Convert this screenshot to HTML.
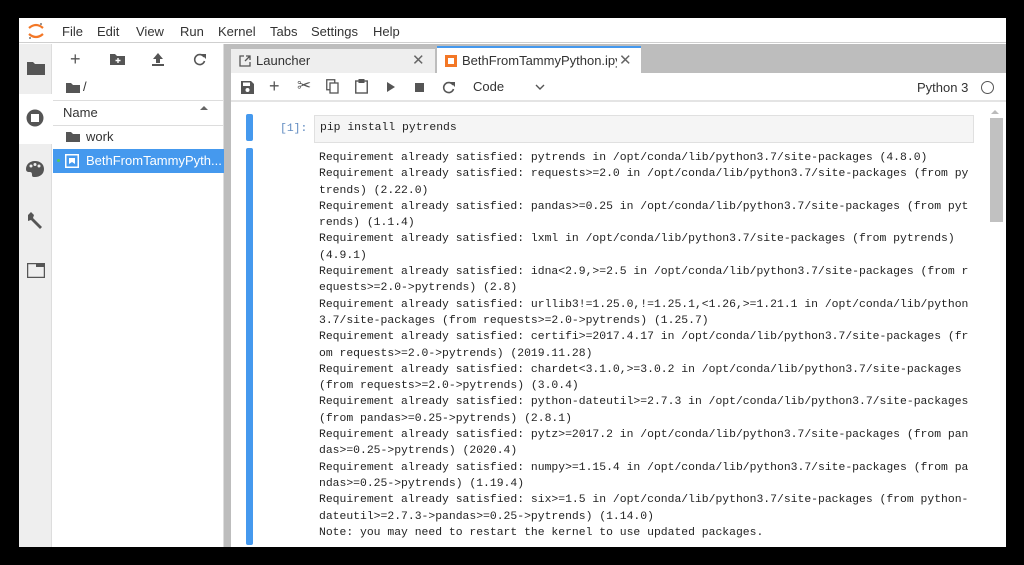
<!DOCTYPE html>
<html><head><style>
*{margin:0;padding:0;box-sizing:border-box}
body{width:1024px;height:565px;background:#000;position:relative;overflow:hidden;font-family:"Liberation Sans",sans-serif;color:#333}
.a{position:absolute}
#win{left:19px;top:18px;width:987px;height:529px;background:#fff}
.menu{font-size:13px;color:#333;top:6px}
.mono{font-family:"Liberation Mono",monospace;font-size:11.4px}
#out div{height:16.3px;line-height:16.3px;white-space:pre;color:#222}
</style></head><body>
<div id="win" class="a">
 <div class="a" style="left:0;top:0;width:987px;height:25px;background:#fff;border-bottom:1px solid #cfcfcf"></div>
 <svg class="a" style="left:7px;top:3px" width="20" height="20" viewBox="0 0 20 20"><path d="M3 7 Q10 1 17 7" stroke="#f37726" stroke-width="2.2" fill="none"/><path d="M3 13 Q10 19 17 13" stroke="#f37726" stroke-width="2.2" fill="none"/><circle cx="15" cy="3" r="1" fill="#777"/><circle cx="4" cy="17" r="1" fill="#777"/></svg>
 <div class="a menu" style="left:43px">File</div>
 <div class="a menu" style="left:78px">Edit</div>
 <div class="a menu" style="left:117px">View</div>
 <div class="a menu" style="left:161px">Run</div>
 <div class="a menu" style="left:199px">Kernel</div>
 <div class="a menu" style="left:251px">Tabs</div>
 <div class="a menu" style="left:292px">Settings</div>
 <div class="a menu" style="left:354px">Help</div>
 <div class="a" style="left:0;top:26px;width:33px;height:503px;background:#eee;border-right:1px solid #ddd"></div>
 <div class="a" style="left:0;top:76px;width:34px;height:50px;background:#fff"></div>
 <svg class="a" style="left:8px;top:42px" width="18" height="15"><path d="M0 2h6l2 2h10v11H0z" fill="#555"/></svg>
 <svg class="a" style="left:7px;top:91px" width="18" height="18"><circle cx="9" cy="9" r="8.5" fill="#555"/><rect x="5" y="5" width="8" height="8" fill="#fff"/></svg>
 <svg class="a" style="left:7px;top:143px" width="18" height="16"><path d="M9 0C3 0 0 4 0 8c0 3 2 3 4 3 2 0 2 2 2 3 0 2 1 2 3 2 5 0 9-3 9-8S14 0 9 0z" fill="#555"/><circle cx="5" cy="5" r="1.5" fill="#eee"/><circle cx="9" cy="3.5" r="1.5" fill="#eee"/><circle cx="13" cy="5" r="1.5" fill="#eee"/></svg>
 <svg class="a" style="left:7px;top:193px" width="18" height="18"><path d="M2 4l3-3 3 3-1 3 9 9-2 2-9-9-3 1z" fill="#555"/></svg>
 <svg class="a" style="left:8px;top:245px" width="18" height="15"><rect x="0.5" y="0.5" width="17" height="14" fill="none" stroke="#555" stroke-width="1.5"/><rect x="9" y="0" width="9" height="4" fill="#555"/></svg>
 <div class="a" style="left:34px;top:26px;width:171px;height:503px;background:#fff;border-right:1px solid #ddd"></div>
 <div class="a" style="left:51px;top:31px;font-size:18px;color:#555">+</div>
 <svg class="a" style="left:91px;top:35px" width="15" height="12"><path d="M0 1h5l2 2h8v9H0z" fill="#555"/><path d="M8 5v5M5.5 7.5h5" stroke="#fff" stroke-width="1.4"/></svg>
 <svg class="a" style="left:133px;top:35px" width="12" height="13"><path d="M6 0l5 6H8v4H4V6H1z" fill="#555"/><rect x="0" y="11" width="12" height="2" fill="#555"/></svg>
 <svg class="a" style="left:174px;top:35px" width="13" height="13"><path d="M11 4A5 5 0 1 0 11.5 8" stroke="#555" stroke-width="1.6" fill="none"/><path d="M8 1h5v5z" fill="#555"/></svg>
 <svg class="a" style="left:47px;top:64px" width="14" height="11"><path d="M0 1h5l2 2h7v8H0z" fill="#555"/></svg>
 <div class="a" style="left:64px;top:61px;font-size:13px">/</div>
 <div class="a" style="left:34px;top:82px;width:171px;height:26px;border-top:1px solid #ddd;border-bottom:1px solid #ddd"></div>
 <div class="a" style="left:44px;top:87px;font-size:13px">Name</div>
 <div class="a" style="left:181px;top:88px;width:0;height:0;border-left:4px solid transparent;border-right:4px solid transparent;border-bottom:4px solid #666"></div>
 <svg class="a" style="left:47px;top:113px" width="14" height="11"><path d="M0 1h5l2 2h7v8H0z" fill="#555"/></svg>
 <div class="a" style="left:67px;top:111px;font-size:13px;color:#333">work</div>
 <div class="a" style="left:34px;top:131px;width:171px;height:24px;background:#4599ee"></div>
 <div class="a" style="left:38px;top:141px;width:3px;height:3px;background:#5c5;border-radius:50%"></div>
 <svg class="a" style="left:46px;top:136px" width="14" height="14"><rect x="0.75" y="0.75" width="12.5" height="12.5" fill="none" stroke="#fff" stroke-width="1.5"/><path d="M4 4h6v6l-3-2-3 2z" fill="#fff"/></svg>
 <div class="a" style="left:67px;top:135px;font-size:13px;color:#fff">BethFromTammyPyth...</div>
 <div class="a" style="left:205px;top:26px;width:7px;height:503px;background:#bdbdbd"></div>
 <div class="a" style="left:212px;top:26px;width:775px;height:29px;background:#bdbdbd"></div>
 <div class="a" style="left:212px;top:31px;width:204px;height:24px;background:#eee"></div>
 <svg class="a" style="left:220px;top:37px" width="12" height="12"><path d="M5 1H1v10h10V7" stroke="#555" stroke-width="1.3" fill="none"/><path d="M6 6l5-5M7 1h4v4" stroke="#555" stroke-width="1.3" fill="none"/></svg>
 <div class="a" style="left:237px;top:35px;font-size:13px">Launcher</div>
 <div class="a" style="left:393px;top:33px;font-size:15px;color:#666">✕</div>
 <div class="a" style="left:418px;top:28px;width:204px;height:28px;background:#fff;border-top:2px solid #4599ee"></div>
 <svg class="a" style="left:426px;top:37px" width="12" height="12"><rect width="12" height="12" fill="#f37726"/><rect x="3" y="3" width="6" height="6" fill="#fff"/></svg>
 <div class="a" style="left:443px;top:35px;font-size:13px;width:155px;overflow:hidden;white-space:nowrap">BethFromTammyPython.ipynb</div>
 <div class="a" style="left:600px;top:33px;font-size:15px;color:#666">✕</div>
 <div class="a" style="left:212px;top:55px;width:775px;height:29px;background:#fff;border-bottom:2px solid #e4e4e4"></div>
 <svg class="a" style="left:222px;top:63px" width="13" height="13"><path d="M0 0h10l3 3v10H0z" fill="#555"/><rect x="2" y="1.5" width="7" height="3.5" fill="#fff"/><circle cx="6.5" cy="9" r="2" fill="#fff"/></svg>
 <div class="a" style="left:250px;top:58px;font-size:18px;color:#555">+</div>
 <div class="a" style="left:278px;top:58px;font-size:17px;color:#555">✂</div>
 <svg class="a" style="left:307px;top:61px" width="13" height="15"><rect x="0.75" y="0.75" width="8" height="10" fill="none" stroke="#555" stroke-width="1.3"/><rect x="4" y="4" width="8" height="10" fill="#fff" stroke="#555" stroke-width="1.3"/></svg>
 <svg class="a" style="left:336px;top:61px" width="13" height="15"><rect x="0.75" y="2" width="11.5" height="12" fill="none" stroke="#555" stroke-width="1.4"/><rect x="3.5" y="0" width="6" height="4" fill="#555"/></svg>
 <div class="a" style="left:368px;top:64px;width:0;height:0;border-top:5px solid transparent;border-bottom:5px solid transparent;border-left:8px solid #555"></div>
 <div class="a" style="left:396px;top:65px;width:9px;height:9px;background:#555"></div>
 <svg class="a" style="left:423px;top:63px" width="13" height="13"><path d="M11 4A5 5 0 1 0 11.5 8" stroke="#555" stroke-width="1.6" fill="none"/><path d="M8 1h5v5z" fill="#555"/></svg>
 <div class="a" style="left:454px;top:61px;font-size:13px">Code</div>
 <svg class="a" style="left:516px;top:66px" width="10" height="7"><path d="M1 1l4 4 4-4" stroke="#555" stroke-width="1.4" fill="none"/></svg>
 <div class="a" style="left:898px;top:62px;font-size:13px">Python 3</div>
 <div class="a" style="left:962px;top:63px;width:13px;height:13px;border:1.5px solid #555;border-radius:50%"></div>
 <div class="a" style="left:972px;top:92px;width:0;height:0;border-left:4px solid transparent;border-right:4px solid transparent;border-bottom:4px solid #bbb"></div>
 <div class="a" style="left:971px;top:100px;width:13px;height:104px;background:#c1c1c1"></div>
 <div class="a" style="left:227px;top:96px;width:7px;height:27px;background:#4599ee;border-radius:2px"></div>
 <div class="a" style="left:227px;top:130px;width:7px;height:397px;background:#4599ee;border-radius:2px"></div>
 <div class="a mono" style="left:261px;top:105px;color:#5f8ac0">[1]:</div>
 <div class="a" style="left:295px;top:97px;width:660px;height:28px;background:#f5f5f5;border:1px solid #e0e0e0"></div>
 <div class="a mono" style="left:301px;top:104px;color:#222">pip install pytrends</div>
 <div id="out" class="a mono" style="left:300px;top:132px">
<div>Requirement already satisfied: pytrends in /opt/conda/lib/python3.7/site-packages (4.8.0)</div>
<div>Requirement already satisfied: requests&gt;=2.0 in /opt/conda/lib/python3.7/site-packages (from py</div>
<div>trends) (2.22.0)</div>
<div>Requirement already satisfied: pandas&gt;=0.25 in /opt/conda/lib/python3.7/site-packages (from pyt</div>
<div>rends) (1.1.4)</div>
<div>Requirement already satisfied: lxml in /opt/conda/lib/python3.7/site-packages (from pytrends)</div>
<div>(4.9.1)</div>
<div>Requirement already satisfied: idna&lt;2.9,&gt;=2.5 in /opt/conda/lib/python3.7/site-packages (from r</div>
<div>equests&gt;=2.0-&gt;pytrends) (2.8)</div>
<div>Requirement already satisfied: urllib3!=1.25.0,!=1.25.1,&lt;1.26,&gt;=1.21.1 in /opt/conda/lib/python</div>
<div>3.7/site-packages (from requests&gt;=2.0-&gt;pytrends) (1.25.7)</div>
<div>Requirement already satisfied: certifi&gt;=2017.4.17 in /opt/conda/lib/python3.7/site-packages (fr</div>
<div>om requests&gt;=2.0-&gt;pytrends) (2019.11.28)</div>
<div>Requirement already satisfied: chardet&lt;3.1.0,&gt;=3.0.2 in /opt/conda/lib/python3.7/site-packages</div>
<div>(from requests&gt;=2.0-&gt;pytrends) (3.0.4)</div>
<div>Requirement already satisfied: python-dateutil&gt;=2.7.3 in /opt/conda/lib/python3.7/site-packages</div>
<div>(from pandas&gt;=0.25-&gt;pytrends) (2.8.1)</div>
<div>Requirement already satisfied: pytz&gt;=2017.2 in /opt/conda/lib/python3.7/site-packages (from pan</div>
<div>das&gt;=0.25-&gt;pytrends) (2020.4)</div>
<div>Requirement already satisfied: numpy&gt;=1.15.4 in /opt/conda/lib/python3.7/site-packages (from pa</div>
<div>ndas&gt;=0.25-&gt;pytrends) (1.19.4)</div>
<div>Requirement already satisfied: six&gt;=1.5 in /opt/conda/lib/python3.7/site-packages (from python-</div>
<div>dateutil&gt;=2.7.3-&gt;pandas&gt;=0.25-&gt;pytrends) (1.14.0)</div>
<div>Note: you may need to restart the kernel to use updated packages.</div>
 </div>
</div>
</body></html>
